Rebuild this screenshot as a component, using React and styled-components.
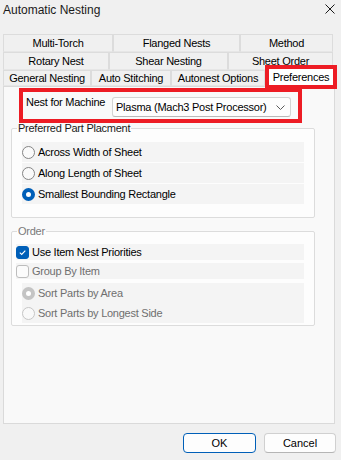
import styled, { createGlobalStyle } from 'styled-components'

const GlobalStyle = createGlobalStyle`
  body {
    margin: 0;
    background: #f0f0f0;
    font-family: "Liberation Sans", Arial, sans-serif;
  }
`

const Dialog = styled.div`
  width: 341px;
  height: 460px;
  display: flex;
  flex-direction: column;
  background: #f0f0f0;
  overflow: hidden;
  color: #000;
`

const TitleBar = styled.div`
  height: 20px;
  flex-shrink: 0;
  display: flex;
  align-items: center;
  justify-content: space-between;
  padding: 0 6px 0 3px;
  font-size: 12px;
  color: #1a1a1a;
`

const CloseGlyph = styled.svg`
  width: 10px;
  height: 10px;
  margin-top: -3px;
`

const TabStrip = styled.div`
  margin-top: 14px;
  padding-left: 3px;
  display: flex;
  flex-direction: column;
`

const TabRow = styled.div`
  display: flex;
  height: ${p => p.$h}px;
`

const Tab = styled.div`
  box-sizing: border-box;
  width: ${p => p.$w}px;
  height: 100%;
  display: flex;
  align-items: center;
  justify-content: center;
  border: 1px solid #dcdcdc;
  border-bottom-color: #e6e6e6;
  background: #f0f0f0;
  font-size: 11px;
  letter-spacing: -0.25px;
  white-space: nowrap;
`

const ActiveTab = styled(Tab)`
  position: relative;
  z-index: 2;
  height: 24px;
  margin-top: -5px;
  border: 4px solid #ed1c24;
  background: #fff;
`

const Page = styled.div`
  box-sizing: border-box;
  margin: 0 6px 0 3px;
  height: 338px;
  border: 1px solid #dadada;
  background: #f9f9f9;
  display: flex;
  flex-direction: column;
  font-size: 11px;
  letter-spacing: -0.25px;
`

const MachineBox = styled.div`
  position: relative;
  z-index: 1;
  box-sizing: border-box;
  margin: 1px 0 0 15px;
  width: 283px;
  height: 35px;
  border: 4px solid #ed1c24;
  display: flex;
  align-items: flex-start;
  padding: 5px 7px 0 3px;
`

const MachineLabel = styled.span`
  flex: 0 0 86px;
  line-height: 13px;
  margin-top: -1px;
`

const Select = styled.div`
  box-sizing: border-box;
  width: 179px;
  height: 20px;
  display: flex;
  align-items: center;
  justify-content: space-between;
  padding: 0 5px 0 3px;
  border: 1px solid #d3d3d3;
  border-bottom-color: #b9b9b9;
  border-radius: 3px;
  background: #fdfdfd;
`

const Group = styled.fieldset`
  box-sizing: border-box;
  margin: ${p => p.$top}px 19px 0 7px;
  padding: ${p => p.$padTop}px 10px ${p => p.$padBottom}px ${p => p.$indent}px;
  border: 1px solid #dcdcdc;
  border-radius: 2px;
  background: #fdfdfd;
  min-inline-size: 0;

  & > legend {
    margin-left: ${p => 5 - p.$indent}px;
    padding: 0 1px;
    line-height: 14px;
    color: ${p => (p.$muted ? '#7a7a7a' : '#1a1a1a')};
  }
`

const OptionList = styled.div`
  display: flex;
  flex-direction: column;
  gap: ${p => p.$gap}px;
`

const OptionRow = styled.label`
  display: flex;
  align-items: center;
  gap: 3px;
  height: ${p => p.$h}px;
  background: ${p => (p.$plain ? 'transparent' : '#f4f4f4')};
  color: ${p => (p.$disabled ? '#6f6f6f' : '#000')};
  white-space: nowrap;
`

const SubOptions = styled.div`
  margin: 4px 0 0 6px;
  display: flex;
  flex-direction: column;
  background: #f4f4f4;
`

const RadioDot = styled.span`
  box-sizing: border-box;
  flex: 0 0 13px;
  width: 13px;
  height: 13px;
  border-radius: 50%;
  border: ${p =>
    p.$checked
      ? `4px solid ${p.$disabled ? '#c4c4c4' : '#005fb8'}`
      : `1px solid ${p.$disabled ? '#c6c6c6' : '#858585'}`};
  background: ${p => (p.$checked ? '#fff' : p.$disabled ? '#f9f9f9' : '#fafafa')};
`

const CheckBox = styled.span`
  box-sizing: border-box;
  flex: 0 0 13px;
  width: 13px;
  height: 13px;
  border-radius: 3px;
  display: flex;
  align-items: center;
  justify-content: center;
  border: 1px solid ${p => (p.$checked ? '#005fb8' : '#bdbdbd')};
  background: ${p => (p.$checked ? '#005fb8' : '#fbfbfb')};
`

const Footer = styled.div`
  display: flex;
  justify-content: flex-end;
  gap: 8px;
  margin-top: 9px;
  padding-right: 5px;
`

const Button = styled.button`
  box-sizing: border-box;
  width: ${p => p.$w}px;
  height: 20px;
  padding: 0;
  border-radius: 4px;
  border: 1px solid ${p => (p.$primary ? '#005fb8' : '#d0d0d0')};
  border-bottom-color: ${p => (p.$primary ? '#005fb8' : '#b5b5b5')};
  background: #fdfdfd;
  font-family: "Liberation Sans", Arial, sans-serif;
  font-size: 11px;
  color: #000;
`

const Radio = ({ checked, disabled, children }) => (
  <OptionRow $h={20} $plain={disabled} $disabled={disabled}>
    <RadioDot $checked={checked} $disabled={disabled} />
    {children}
  </OptionRow>
)

const Check = ({ checked, disabled, children }) => (
  <OptionRow $h={16} $disabled={disabled}>
    <CheckBox $checked={checked}>
      {checked && (
        <svg width="9" height="9" viewBox="0 0 9 9">
          <path d="M1.8 4.6 L3.7 6.4 L7.3 2.6" fill="none" stroke="#fff" strokeWidth="1.1" />
        </svg>
      )}
    </CheckBox>
    {children}
  </OptionRow>
)

const tabRows = [
  { h: 18, tabs: [['Multi-Torch', 110], ['Flanged Nests', 127], ['Method', 93]] },
  { h: 18, tabs: [['Rotary Nest', 106], ['Shear Nesting', 119], ['Sheet Order', 105]] },
  { h: 16, tabs: [['General Nesting', 88], ['Auto Stitching', 80], ['Autonest Options', 94], ['Preferences', 72, true]] },
]

export default function App() {
  return (
    <>
      <GlobalStyle />
      <Dialog>
        <TitleBar>
          <span>Automatic Nesting</span>
          <CloseGlyph viewBox="0 0 10 10">
            <path d="M0.5 0.5 L9.5 9.5 M9.5 0.5 L0.5 9.5" stroke="#1a1a1a" strokeWidth="1" />
          </CloseGlyph>
        </TitleBar>

        <TabStrip>
          {tabRows.map((row, i) => (
            <TabRow key={i} $h={row.h}>
              {row.tabs.map(([name, w, active]) =>
                active
                  ? <ActiveTab key={name} $w={w}>{name}</ActiveTab>
                  : <Tab key={name} $w={w}>{name}</Tab>
              )}
            </TabRow>
          ))}
        </TabStrip>

        <Page>
          <MachineBox>
            <MachineLabel>Nest for Machine</MachineLabel>
            <Select>
              <span>Plasma (Mach3 Post Processor)</span>
              <svg width="9" height="5" viewBox="0 0 9 5">
                <path d="M0.5 0.5 L4.5 4.5 L8.5 0.5" fill="none" stroke="#5a5a5a" strokeWidth="1" />
              </svg>
            </Select>
          </MachineBox>

          <Group $top={-2} $indent={10} $padTop={7} $padBottom={13}>
            <legend>Preferred Part Placment</legend>
            <OptionList $gap={1}>
              <Radio>Across Width of Sheet</Radio>
              <Radio>Along Length of Sheet</Radio>
              <Radio checked>Smallest Bounding Rectangle</Radio>
            </OptionList>
          </Group>

          <Group $top={6} $indent={4} $padTop={6} $padBottom={2} $muted>
            <legend>Order</legend>
            <OptionList $gap={3}>
              <Check checked>Use Item Nest Priorities</Check>
              <Check disabled>Group By Item</Check>
            </OptionList>
            <SubOptions>
              <Radio checked disabled>Sort Parts by Area</Radio>
              <Radio disabled>Sort Parts by Longest Side</Radio>
            </SubOptions>
          </Group>
        </Page>

        <Footer>
          <Button $w={73} $primary>OK</Button>
          <Button $w={72}>Cancel</Button>
        </Footer>
      </Dialog>
    </>
  )
}
